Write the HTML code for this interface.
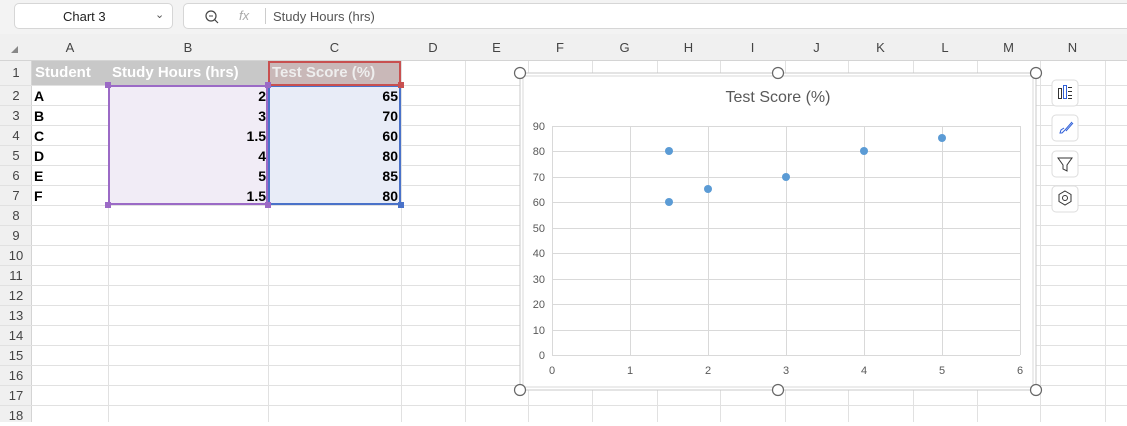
<!DOCTYPE html>
<html><head><meta charset="utf-8"><style>
*{margin:0;padding:0;box-sizing:border-box}
body{width:1127px;height:422px;overflow:hidden;background:#fff;font-family:"Liberation Sans",sans-serif;position:relative}
.a{position:absolute}
.tb{left:0;top:0;width:1127px;height:34px;background:#f3f3f3}
.box{background:#fff;border:1px solid #d6d6d6;border-radius:5px;height:26px;top:3px}
.ch{top:34px;height:27px;background:#f0f0f0;border-bottom:1px solid #d4d4d4}
.chl{font-size:13px;color:#444;text-align:center;line-height:27px;top:34px;height:27px}
.rh{left:0;width:32px;font-size:13px;color:#444;text-align:center;background:#f0f0f0}
.v{width:1px;background:#e1e1e1;top:61px;height:361px}
.h{height:1px;background:#e1e1e1;left:0;width:1127px}
.c{font-size:14px;font-weight:bold;line-height:20px}
</style></head><body>
<div class="a tb"></div>
<div class="a box" style="left:14px;width:159px"><span class="a" style="left:48px;top:5px;font-size:13px;color:#222">Chart 3</span><span class="a" style="left:140px;top:4px;font-size:11px;color:#555">&#8964;</span></div>
<div class="a box" style="left:183px;width:950px">
<svg class="a" style="left:20px;top:5px" width="16" height="16"><circle cx="7" cy="7" r="5" fill="none" stroke="#444" stroke-width="1.2"/><line x1="10.5" y1="10.5" x2="14" y2="14" stroke="#444" stroke-width="1.2"/><line x1="5" y1="7" x2="9" y2="7" stroke="#444"/></svg>
<span class="a" style="left:55px;top:4px;font-size:13px;color:#aaa;font-style:italic">fx</span><span class="a" style="left:81px;top:4px;width:1px;height:16px;background:#ccc"></span><span class="a" style="left:89px;top:5px;font-size:13px;color:#555">Study Hours (hrs)</span></div>
<div class="a ch" style="left:0;width:1127px"></div>
<div class="a" style="left:11px;top:46px;width:0;height:0;border-left:7px solid transparent;border-bottom:7px solid #888"></div>
<div class="a rh" style="top:61px;height:361px;border-right:1px solid #d4d4d4"></div>
<div class="a chl" style="left:32px;width:76px">A</div>
<div class="a chl" style="left:108px;width:160px">B</div>
<div class="a chl" style="left:268px;width:133px">C</div>
<div class="a chl" style="left:401px;width:64px">D</div>
<div class="a chl" style="left:465px;width:63px">E</div>
<div class="a chl" style="left:528px;width:64px">F</div>
<div class="a chl" style="left:592px;width:65px">G</div>
<div class="a chl" style="left:657px;width:63px">H</div>
<div class="a chl" style="left:720px;width:65px">I</div>
<div class="a chl" style="left:785px;width:63px">J</div>
<div class="a chl" style="left:848px;width:65px">K</div>
<div class="a chl" style="left:913px;width:64px">L</div>
<div class="a chl" style="left:977px;width:63px">M</div>
<div class="a chl" style="left:1040px;width:65px">N</div>
<div class="a v" style="left:108px"></div><div class="a v" style="left:268px"></div><div class="a v" style="left:401px"></div><div class="a v" style="left:465px"></div><div class="a v" style="left:528px"></div><div class="a v" style="left:592px"></div><div class="a v" style="left:657px"></div><div class="a v" style="left:720px"></div><div class="a v" style="left:785px"></div><div class="a v" style="left:848px"></div><div class="a v" style="left:913px"></div><div class="a v" style="left:977px"></div><div class="a v" style="left:1040px"></div><div class="a v" style="left:1105px"></div>
<div class="a h" style="top:85px"></div><div class="a h" style="top:105px"></div><div class="a h" style="top:125px"></div><div class="a h" style="top:145px"></div><div class="a h" style="top:165px"></div><div class="a h" style="top:185px"></div><div class="a h" style="top:205px"></div><div class="a h" style="top:225px"></div><div class="a h" style="top:245px"></div><div class="a h" style="top:265px"></div><div class="a h" style="top:285px"></div><div class="a h" style="top:305px"></div><div class="a h" style="top:325px"></div><div class="a h" style="top:345px"></div><div class="a h" style="top:365px"></div><div class="a h" style="top:385px"></div><div class="a h" style="top:405px"></div>
<div class="a rh" style="top:61px;height:24px;line-height:24px;background:none">1</div>
<div class="a rh" style="top:86px;line-height:20px;background:none">2</div><div class="a rh" style="top:106px;line-height:20px;background:none">3</div><div class="a rh" style="top:126px;line-height:20px;background:none">4</div><div class="a rh" style="top:146px;line-height:20px;background:none">5</div><div class="a rh" style="top:166px;line-height:20px;background:none">6</div><div class="a rh" style="top:186px;line-height:20px;background:none">7</div><div class="a rh" style="top:206px;line-height:20px;background:none">8</div><div class="a rh" style="top:226px;line-height:20px;background:none">9</div><div class="a rh" style="top:246px;line-height:20px;background:none">10</div><div class="a rh" style="top:266px;line-height:20px;background:none">11</div><div class="a rh" style="top:286px;line-height:20px;background:none">12</div><div class="a rh" style="top:306px;line-height:20px;background:none">13</div><div class="a rh" style="top:326px;line-height:20px;background:none">14</div><div class="a rh" style="top:346px;line-height:20px;background:none">15</div><div class="a rh" style="top:366px;line-height:20px;background:none">16</div><div class="a rh" style="top:386px;line-height:20px;background:none">17</div><div class="a rh" style="top:406px;line-height:20px;background:none">18</div>
<div class="a" style="left:32px;top:61px;width:236px;height:24px;background:#c8c8c8"></div>
<div class="a" style="left:268px;top:61px;width:133px;height:24px;background:#c9b8b8"></div>
<div class="a" style="left:108px;top:85px;width:160px;height:120px;background:#f1ecf6;border:2px solid #9b6ac6"></div>
<div class="a" style="left:268px;top:85px;width:133px;height:120px;background:#e8ecf7;border:2px solid #4a72c9"></div>
<div class="a" style="left:268px;top:61px;width:133px;height:25px;border:2px solid #c85050"></div>
<div class="a c" style="left:35px;top:63px;color:#fff;font-size:15px">Student</div>
<div class="a c" style="left:112px;top:63px;color:#fff;font-size:15px">Study Hours (hrs)</div>
<div class="a c" style="left:272px;top:63px;color:#eee;font-size:15px">Test Score (%)</div>
<div class="a c" style="left:34px;top:86px">A<br>B<br>C<br>D<br>E<br>F</div>
<div class="a c" style="left:110px;top:86px;width:156px;text-align:right">2<br>3<br>1.5<br>4<br>5<br>1.5</div>
<div class="a c" style="left:270px;top:86px;width:128px;text-align:right">65<br>70<br>60<br>80<br>85<br>80</div>
<div class="a" style="left:105px;top:82px;width:6px;height:6px;background:#9b6ac6"></div>
<div class="a" style="left:265px;top:82px;width:6px;height:6px;background:#9b6ac6"></div>
<div class="a" style="left:105px;top:202px;width:6px;height:6px;background:#9b6ac6"></div>
<div class="a" style="left:265px;top:202px;width:6px;height:6px;background:#9b6ac6"></div>
<div class="a" style="left:398px;top:202px;width:6px;height:6px;background:#4a72c9"></div>
<div class="a" style="left:398px;top:82px;width:6px;height:6px;background:#c85050"></div>
<svg class="a" style="left:0;top:0" width="1127" height="422">
<rect x="520" y="73" width="516" height="317" fill="#fff" stroke="#c8c8c8"/>
<rect x="523" y="76" width="510" height="311" fill="none" stroke="#d8d8d8"/>
<text x="778" y="102" font-size="16" fill="#595959" text-anchor="middle" font-family="Liberation Sans">Test Score (%)</text>
<g stroke="#d9d9d9" stroke-width="1">
<line x1="552" y1="126.5" x2="1020" y2="126.5"/><line x1="552" y1="151.5" x2="1020" y2="151.5"/><line x1="552" y1="177.5" x2="1020" y2="177.5"/><line x1="552" y1="202.5" x2="1020" y2="202.5"/><line x1="552" y1="228.5" x2="1020" y2="228.5"/><line x1="552" y1="253.5" x2="1020" y2="253.5"/><line x1="552" y1="279.5" x2="1020" y2="279.5"/><line x1="552" y1="304.5" x2="1020" y2="304.5"/><line x1="552" y1="330.5" x2="1020" y2="330.5"/><line x1="552" y1="355.5" x2="1020" y2="355.5"/>
<line x1="552.5" y1="126" x2="552.5" y2="355"/><line x1="630.5" y1="126" x2="630.5" y2="355"/><line x1="708.5" y1="126" x2="708.5" y2="355"/><line x1="786.5" y1="126" x2="786.5" y2="355"/><line x1="864.5" y1="126" x2="864.5" y2="355"/><line x1="942.5" y1="126" x2="942.5" y2="355"/><line x1="1020.5" y1="126" x2="1020.5" y2="355"/>
</g>
<g font-size="11" fill="#595959" text-anchor="end" font-family="Liberation Sans">
<text x="545" y="130">90</text><text x="545" y="155">80</text><text x="545" y="181">70</text><text x="545" y="206">60</text><text x="545" y="232">50</text><text x="545" y="257">40</text><text x="545" y="283">30</text><text x="545" y="308">20</text><text x="545" y="334">10</text><text x="545" y="359">0</text>
</g>
<g font-size="11" fill="#595959" text-anchor="middle" font-family="Liberation Sans">
<text x="552" y="374">0</text><text x="630" y="374">1</text><text x="708" y="374">2</text><text x="786" y="374">3</text><text x="864" y="374">4</text><text x="942" y="374">5</text><text x="1020" y="374">6</text>
</g>
<g fill="#5b9bd5">
<circle cx="669" cy="151" r="4"/><circle cx="669" cy="202" r="4"/><circle cx="708" cy="189" r="4"/><circle cx="786" cy="177" r="4"/><circle cx="864" cy="151" r="4"/><circle cx="942" cy="138" r="4"/>
</g>
<g fill="#fff" stroke="#666" stroke-width="1.2">
<circle cx="520" cy="73" r="5.5"/><circle cx="778" cy="73" r="5.5"/><circle cx="1036" cy="73" r="5.5"/><circle cx="520" cy="390" r="5.5"/><circle cx="778" cy="390" r="5.5"/><circle cx="1036" cy="390" r="5.5"/>
</g>
<g fill="#fff" stroke="#ddd">
<rect x="1052" y="80" width="26" height="26" rx="4"/><rect x="1052" y="115" width="26" height="26" rx="4"/><rect x="1052" y="151" width="26" height="26" rx="4"/><rect x="1052" y="186" width="26" height="26" rx="4"/>
</g>
<g fill="none" stroke="#333" stroke-width="1">
<rect x="1058.5" y="88.5" width="3" height="10"/><rect x="1063.5" y="85.5" width="3" height="13" stroke="#2f5fd8"/><line x1="1068" y1="87.5" x2="1072" y2="87.5"/><line x1="1068" y1="91.5" x2="1072" y2="91.5"/><line x1="1068" y1="95.5" x2="1072" y2="95.5"/><line x1="1068" y1="98.5" x2="1072" y2="98.5"/>
<path d="M1072 122 L1065 130 M1073 123 L1066 131 M1065 130 L1062 133 L1060 133 L1061 130 L1064 128" stroke="#2f5fd8"/>
<path d="M1058 158 H1072 L1067 165 V171 L1063 169 V165 Z"/>
<path d="M1065 191 L1071 194.5 V201.5 L1065 205 L1059 201.5 V194.5 Z"/><circle cx="1065" cy="198" r="2.5"/>
</g>
</svg>
</body></html>
